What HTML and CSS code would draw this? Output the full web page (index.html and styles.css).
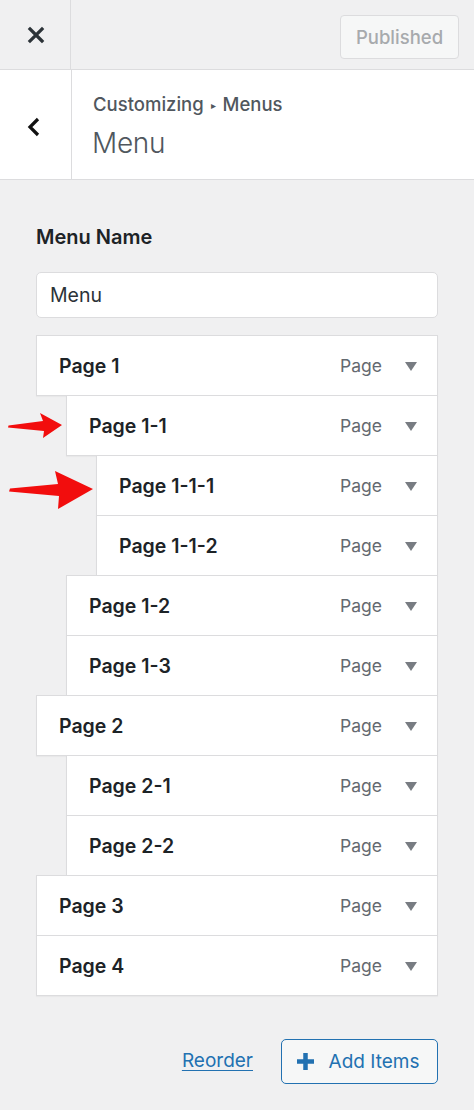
FILE: index.html
```html
<!DOCTYPE html>
<html>
<head>
<meta charset="utf-8">
<link rel="stylesheet" href="styles.css">
</head>
<body>
<div class="panel">
  <div class="topbar">
    <div class="close">
      <svg width="18" height="18" viewBox="0 0 18 18"><path d="M3 3 L15 15 M15 3 L3 15" stroke="#2c3338" stroke-width="3.2" stroke-linecap="square"/></svg>
    </div>
    <div class="topfill">
      <button class="published">Published</button>
    </div>
  </div>
  <div class="header">
    <div class="back">
      <svg width="14" height="20" viewBox="0 0 14 20"><path d="M11 2 L3 10 L11 18" fill="none" stroke="#111" stroke-width="3.2"/></svg>
    </div>
    <div class="titles">
      <div class="crumb">Customizing <span class="sep">▸</span> Menus</div>
      <div class="title">Menu</div>
    </div>
  </div>
  <div class="main">
    <div class="label">Menu Name</div>
    <div class="input">Menu</div>
    <div class="list">
      <div class="item d0"><span class="name">Page 1</span><span class="type">Page</span><span class="caret"></span></div>
      <div class="item d1"><span class="name">Page 1-1</span><span class="type">Page</span><span class="caret"></span></div>
      <div class="item d2"><span class="name">Page 1-1-1</span><span class="type">Page</span><span class="caret"></span></div>
      <div class="item d2"><span class="name">Page 1-1-2</span><span class="type">Page</span><span class="caret"></span></div>
      <div class="item d1"><span class="name">Page 1-2</span><span class="type">Page</span><span class="caret"></span></div>
      <div class="item d1"><span class="name">Page 1-3</span><span class="type">Page</span><span class="caret"></span></div>
      <div class="item d0"><span class="name">Page 2</span><span class="type">Page</span><span class="caret"></span></div>
      <div class="item d1"><span class="name">Page 2-1</span><span class="type">Page</span><span class="caret"></span></div>
      <div class="item d1"><span class="name">Page 2-2</span><span class="type">Page</span><span class="caret"></span></div>
      <div class="item d0"><span class="name">Page 3</span><span class="type">Page</span><span class="caret"></span></div>
      <div class="item d0"><span class="name">Page 4</span><span class="type">Page</span><span class="caret"></span></div>
    </div>
    <div class="actions">
      <a class="reorder" href="#">Reorder</a>
      <button class="add">
        <svg width="19" height="19" viewBox="0 0 19 19"><path d="M9.5 1 V18 M1 9.5 H18" stroke="#2271b1" stroke-width="4.5"/></svg>
        <span>Add Items</span>
      </button>
    </div>
  </div>
  <svg class="arrows" width="474" height="1110" viewBox="0 0 474 1110">
    <polygon points="8,427.5 8.5,425.5 43,421 40,413 62,425 43,438 44,431" fill="#f20d0d"/>
    <polygon points="9,491.5 10,488.5 58,484 55,471 93,489 58,509 59,496" fill="#f20d0d"/>
  </svg>
</div>
</body>
</html>
```

FILE: styles.css
```css
* { box-sizing: border-box; }
html, body { margin: 0; padding: 0; }
body {
  background: #f0f0f1;
  font-family: Inter, "Noto Sans", "Liberation Sans", sans-serif;
  color: #1d2327;
}
.panel {
  position: relative;
  width: 474px;
  min-height: 1110px;
  background: #f0f0f1;
}
.topbar {
  display: flex;
  height: 70px;
  border-bottom: 1px solid #dcdcde;
  background: #f0f0f1;
}
.close {
  width: 71px;
  border-right: 1px solid #dcdcde;
  display: flex;
  align-items: center;
  justify-content: center;
  padding-left: 1px;
}
.topfill {
  flex: 1;
  display: flex;
  justify-content: flex-end;
  align-items: flex-start;
  padding: 15px 15px 0 0;
}
.published {
  width: 119px;
  height: 44px;
  border: 1px solid #dcdcde;
  border-radius: 4px;
  background: #f6f7f7;
  color: #a7aaad;
  font-family: inherit;
  font-size: 18.5px;
  font-weight: 500;
  padding: 0;
}
.header {
  display: flex;
  height: 110px;
  background: #fff;
  border-bottom: 1px solid #dcdcde;
}
.back {
  width: 72px;
  border-right: 1px solid #dcdcde;
  display: flex;
  align-items: center;
  justify-content: center;
  padding-right: 4px;
  padding-top: 4px;
}
.titles {
  padding: 21px 0 0 21px;
}
.crumb {
  font-size: 18.5px;
  line-height: 26px;
  color: #50575e;
  font-weight: 500;
}
.sep {
  font-size: 10px;
  position: relative;
  top: -2px;
  margin: 0 2px;
}
.title {
  font-size: 28px;
  font-weight: 300;
  color: #50575e;
  line-height: 36px;
  margin-top: 5px;
  margin-left: -1px;
  letter-spacing: -0.3px;
}
.main {
  padding: 45px 36px 0 36px;
}
.label {
  font-size: 20px;
  font-weight: 600;
  line-height: 24px;
  color: #1d2327;
}
.input {
  margin-top: 23px;
  height: 46px;
  background: #fff;
  border: 1px solid #dcdcde;
  border-radius: 5px;
  padding: 0 13px;
  display: flex;
  align-items: center;
  font-size: 19.5px;
  color: #2c3338;
}
.list {
  margin-top: 17px;
  display: flex;
  flex-direction: column;
}
.item {
  height: 61px;
  margin-top: -1px;
  background: #fff;
  border: 1px solid #dcdcde;
  display: flex;
  align-items: center;
  padding: 0 20px 0 22px;
  box-shadow: 0 1px 1px rgba(0,0,0,0.03);
}
.item:first-child { margin-top: 0; }
.d1 { margin-left: 30px; }
.d2 { margin-left: 60px; }
.name {
  flex: 1;
  font-size: 19.5px;
  font-weight: 600;
  color: #1d2327;
}
.type {
  font-size: 17.5px;
  color: #646970;
  margin-right: 23px;
}
.caret {
  width: 0;
  height: 0;
  border-left: 6px solid transparent;
  border-right: 6px solid transparent;
  border-top: 9px solid #787c82;
  margin-top: 1px;
}
.actions {
  margin-top: 43px;
  display: flex;
  justify-content: flex-end;
  align-items: center;
}
.reorder {
  font-size: 19px;
  color: #2271b1;
  text-decoration: underline;
  text-underline-offset: 3px;
  margin-right: 28px;
  margin-top: -3px;
}
.add {
  width: 157px;
  height: 45px;
  border: 1px solid #2271b1;
  border-radius: 5px;
  background: #f6f7f7;
  color: #2271b1;
  font-family: inherit;
  font-size: 19px;
  display: flex;
  align-items: center;
  justify-content: center;
  gap: 14px;
  padding: 0 4px 0 0;
}
.arrows {
  position: absolute;
  left: 0;
  top: 0;
  pointer-events: none;
}
```
